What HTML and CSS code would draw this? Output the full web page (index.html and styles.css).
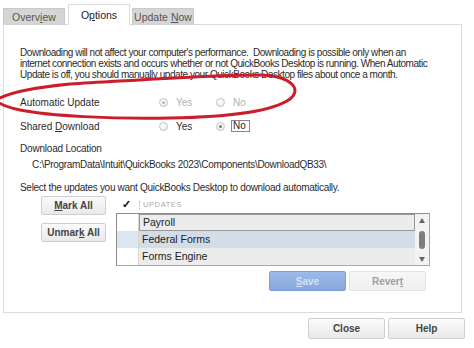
FILE: index.html
```html
<!DOCTYPE html>
<html lang="en">
<head>
    <meta charset="UTF-8">
    <meta name="viewport" content="width=device-width, initial-scale=1.0">
    <title>Update QuickBooks Desktop - Options</title>
    <link rel="stylesheet" href="styles.css">
</head>
<body>
    <div class="tabs">
        <div class="tab">Overv<u>i</u>ew</div>
        <div class="tab active">O<u>p</u>tions</div>
        <div class="tab">Update <u>N</u>ow</div>
    </div>
    <div class="panel">
        <p class="intro">
            Downloading will not affect your computer's performance.&nbsp; Downloading is possible only when an<br>
            internet connection exists and occurs whether or not QuickBooks Desktop is running. When Automatic<br>
            Update is off, you should manually update your QuickBooks Desktop files about once a month.
        </p>

        <div class="opt-row first">
            <span>Automatic Update</span>
            <label class="radio disabled"><span class="dot checked"></span>Yes</label>
            <label class="radio disabled"><span class="dot"></span>No</label>
        </div>
        <div class="opt-row">
            <span>Shared <u>D</u>ownload</span>
            <label class="radio"><span class="dot"></span>Yes</label>
            <label class="radio"><span class="dot checked"></span><span class="focus">No</span></label>
        </div>

        <div class="loc-label">Download Location</div>
        <div class="loc-path">C:\ProgramData\Intuit\QuickBooks 2023\Components\DownloadQB33\</div>
        <div class="select-label">Select the updates you want QuickBooks Desktop to download automatically.</div>

        <div class="updates">
            <div class="side-buttons">
                <button class="btn"><u>M</u>ark All</button>
                <button class="btn">Unmar<u>k</u> All</button>
            </div>
            <div class="list-wrap">
                <div class="list-head">
                    <span class="check">&#10003;</span>
                    <span class="sep"></span>
                    <span class="head-label">UPDATES</span>
                </div>
                <div class="list">
                    <div class="rows">
                        <div class="row focused"><span class="cell-check"></span><span class="cell-name">Payroll</span></div>
                        <div class="row selected"><span class="cell-check"></span><span class="cell-name">Federal Forms</span></div>
                        <div class="row"><span class="cell-check"></span><span class="cell-name">Forms Engine</span></div>
                    </div>
                    <div class="scrollbar">
                        <span class="arrow up"></span>
                        <span class="thumb"></span>
                        <span class="arrow down"></span>
                    </div>
                </div>
            </div>
        </div>

        <div class="panel-actions">
            <button class="btn save"><u>S</u>ave</button>
            <button class="btn revert">Rever<u>t</u></button>
        </div>
    </div>

    <div class="footer">
        <button class="btn">Close</button>
        <button class="btn">Help</button>
    </div>

    <svg class="markup" width="474" height="348" viewBox="0 0 474 348">
        <path d="M -2 99 C 10 92, 40 87, 70 84 C 140 80, 220 74, 262 75 C 292 77, 302 89, 290 99 C 272 112, 230 117, 170 118 C 110 119, 50 116, 20 110 C 6 107, -2 103, -4 100" fill="none" stroke="#cc1d2a" stroke-width="3" stroke-linecap="round"/>
    </svg>
</body>
</html>
```

FILE: styles.css
```css
body {
    font-family: "Liberation Sans", Arial, sans-serif;
    font-size: 10px;
    color: #2b2b2b;
    background-color: #fff;
    margin: 0;
    width: 474px;
    height: 348px;
    position: relative;
    overflow: hidden;
}
u {
    text-decoration-thickness: 1px;
}
.tabs {
    display: flex;
    align-items: flex-end;
    height: 25px;
    padding-left: 3px;
    margin-bottom: -1px;
}
.tab {
    width: 60px;
    height: 16px;
    line-height: 16px;
    text-align: center;
    font-size: 10.5px;
    color: #555;
    background-color: #d5d5d5;
    border: 1px solid #c9c9c9;
    border-bottom: none;
    margin-right: 3px;
}
.tab.active {
    height: 20px;
    line-height: 20px;
    color: #222;
    background-color: #fff;
    border-color: #dcdcdc;
    position: relative;
    z-index: 1;
    margin-right: 2px;
}
.panel {
    margin-left: 3px;
    width: 459px;
    height: 289px;
    box-sizing: border-box;
    border: 1px solid #dcdcdc;
    padding: 22px 16px 0 16px;
}
.intro {
    margin: 0;
    line-height: 11px;
    letter-spacing: -0.45px;
    white-space: nowrap;
}
.opt-row {
    display: grid;
    grid-template-columns: 139px 57px auto;
    align-items: center;
    height: 16px;
    margin-top: 8px;
}
.opt-row.first {
    margin-top: 14px;
}
.radio {
    display: flex;
    align-items: center;
    gap: 8px;
}
.radio.disabled {
    color: #b0b0b0;
}
.dot {
    width: 9px;
    height: 9px;
    border-radius: 50%;
    border: 1px solid #c4c4c4;
    background: radial-gradient(circle at 40% 35%, #fff 0%, #e6e6e6 100%);
    box-sizing: border-box;
    position: relative;
}
.dot.checked::after {
    content: "";
    position: absolute;
    left: 2px;
    top: 2px;
    width: 3px;
    height: 3px;
    border-radius: 50%;
    background-color: #777;
}
.radio.disabled .dot.checked::after {
    background-color: #bbb;
}
.focus {
    border: 1px solid #888;
    padding: 0 3px 0 1px;
    line-height: 10px;
    color: #222;
    margin-left: -2px;
}
.loc-label {
    margin-top: 9px;
    line-height: 12px;
    letter-spacing: -0.2px;
}
.loc-path {
    margin-top: 4px;
    margin-left: 12px;
    line-height: 12px;
    letter-spacing: -0.3px;
}
.select-label {
    margin-top: 11px;
    line-height: 12px;
    letter-spacing: -0.3px;
}
.updates {
    display: flex;
    gap: 10px;
    margin-top: 2px;
}
.side-buttons {
    display: flex;
    flex-direction: column;
    gap: 8px;
    margin-left: 21px;
}
.btn {
    font-family: inherit;
    font-size: 10px;
    font-weight: bold;
    color: #444;
    background: linear-gradient(#fbfbfb, #e9e9e9);
    border: 1px solid #cfcfcf;
    border-radius: 2px;
    padding: 0;
    width: 65px;
    height: 19px;
}
.list-wrap {
    width: 314px;
}
.list-head {
    display: flex;
    align-items: center;
    height: 17px;
}
.check {
    font-size: 11px;
    font-weight: bold;
    color: #111;
    margin-left: 6px;
    width: 12px;
}
.sep {
    width: 0;
    height: 8px;
    border-left: 1px dotted #aaa;
    margin-left: 5px;
}
.head-label {
    font-size: 7.5px;
    letter-spacing: 0.6px;
    color: #aaa;
    margin-left: 3px;
}
.list {
    display: flex;
    border: 1px solid #a8a8a8;
    border-top-color: #8c8c8c;
    border-left-color: #8c8c8c;
    height: 53px;
    box-sizing: border-box;
}
.rows {
    flex: 1;
}
.row {
    display: flex;
    height: 17px;
    background-color: #ececec;
}
.cell-check {
    width: 21px;
    background-color: #fff;
    border-right: 1px solid #d6d6d6;
}
.cell-name {
    flex: 1;
    padding-left: 3px;
    line-height: 17px;
    font-size: 10.5px;
    color: #222;
}
.row.focused .cell-name {
    border: 1px solid #999;
    line-height: 15px;
}
.row.selected {
    background-color: #d3dde8;
}
.row.selected .cell-check {
    background-color: #dde5ee;
}
.scrollbar {
    width: 14px;
    background-color: #f3f3f3;
    display: flex;
    flex-direction: column;
    align-items: center;
    justify-content: space-between;
    padding: 4px 0 3px;
    box-sizing: border-box;
}
.arrow {
    width: 0;
    height: 0;
    border-left: 3px solid transparent;
    border-right: 3px solid transparent;
}
.arrow.up {
    border-bottom: 5px solid #666;
}
.arrow.down {
    border-top: 5px solid #666;
}
.thumb {
    width: 6px;
    height: 18px;
    border-radius: 3px;
    background-color: #7e7e7e;
}
.panel-actions {
    display: flex;
    justify-content: flex-end;
    gap: 3px;
    margin-top: 5px;
    margin-right: 19px;
}
.panel-actions .btn {
    width: 77px;
    height: 20px;
}
.btn.save {
    background: linear-gradient(#9cbbe9, #86a7dc);
    border-color: #7d9fd6;
    color: #d4e1f5;
}
.btn.revert {
    background: linear-gradient(#f7f7f7, #efefef);
    border-color: #e3e3e3;
    color: #a0a0a0;
}
.footer {
    display: flex;
    justify-content: flex-end;
    gap: 3px;
    margin-top: 5px;
    padding-right: 9px;
}
.footer .btn {
    width: 77px;
    height: 21px;
}
.markup {
    position: absolute;
    left: 0;
    top: 0;
    pointer-events: none;
}
```
